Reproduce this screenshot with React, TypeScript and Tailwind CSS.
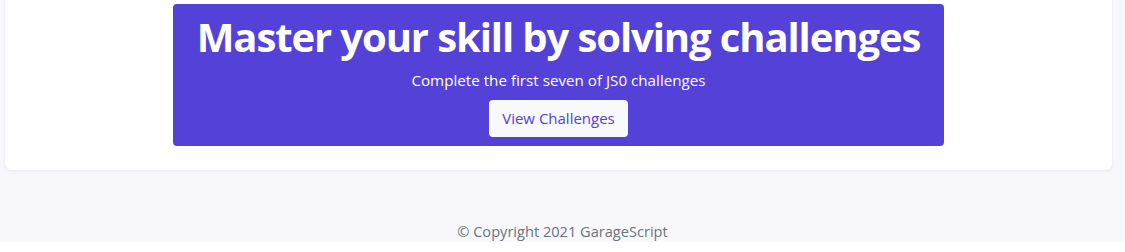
export default function App() {
  return (
    <div className="min-h-[252px] bg-[#f8f8fc] font-['Open_Sans',sans-serif]">
      {/* Main card (top is scrolled off) */}
      <div className="ml-[5px] mr-[13px] -mt-[20px] rounded-md bg-white pt-[24px] pb-[24px] shadow-[0_1px_3px_rgba(0,0,0,0.08)]">
        <div className="mx-auto flex w-[771px] flex-col items-center rounded bg-[#5441d8] pt-[7px] pb-[9px] text-white">
          <h1 className="whitespace-nowrap text-[40px] font-bold leading-[52px] tracking-[-1.1px]">
            Master your skill by solving challenges
          </h1>
          <p className="mt-[6px] text-[15.2px] leading-[22px]">Complete the first seven of JS0 challenges</p>
          <button className="mt-[9px] h-[37px] rounded bg-[#f8f9fb] px-[13px] text-[15px] text-[#5441d8]">
            View Challenges
          </button>
        </div>
      </div>
      <footer className="pt-[50px] text-center text-[14.6px] leading-[22px] text-[#6b7280]">
        © Copyright 2021 GarageScript
      </footer>
    </div>
  );
}
